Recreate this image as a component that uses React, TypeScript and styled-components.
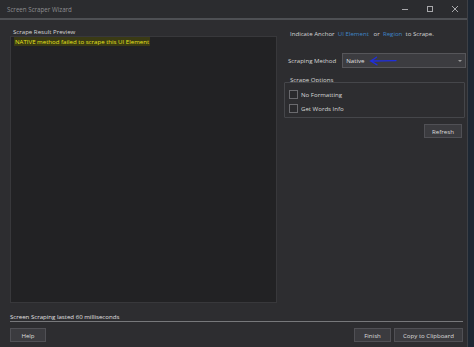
import React from 'react';
import styled, { createGlobalStyle } from 'styled-components';

const Global = createGlobalStyle`
  html, body {
    margin: 0;
    padding: 0;
    background: #1d2733;
  }
  body {
    font-family: 'Open Sans', 'Noto Sans', sans-serif;
  }
`;

const Desktop = styled.div`
  display: flex;
  width: 474px;
  height: 347px;
  overflow: hidden;
  background: #1d2733;
`;

const Window = styled.div`
  display: flex;
  flex-direction: column;
  width: 468px;
  height: 347px;
  background: #2d2d30;
  border-right: 1px solid #3e4045;
  box-sizing: border-box;
`;

const TitleBar = styled.div`
  display: flex;
  align-items: center;
  height: 18px;
  padding-left: 7px;
  background: #2b2c2f;
  border-bottom: 2px solid #4e5054;
  flex-shrink: 0;
`;

const Title = styled.div`
  flex: 1;
  font-size: 6.2px;
  color: #8c8d90;
`;

const WinButton = styled.div`
  width: 25px;
  height: 18px;
  display: flex;
  align-items: center;
  justify-content: center;
`;

const Body = styled.div`
  flex: 1;
  display: flex;
  flex-direction: column;
  padding: 7px 1px 5px 10px;
`;

const Columns = styled.div`
  display: flex;
  gap: 9px;
`;

const Left = styled.div`
  width: 267px;
  display: flex;
  flex-direction: column;
`;

const Right = styled.div`
  flex: 1;
  display: flex;
  flex-direction: column;
  padding-top: 2px;
`;

const Label = styled.div<{ $indent?: number }>`
  font-size: 6.1px;
  line-height: 9px;
  color: #d6d6d6;
  padding-left: ${p => p.$indent ?? 0}px;
  white-space: nowrap;
`;

const Preview = styled.div`
  height: 267px;
  background: #222224;
  border: 1px solid #38383b;
  box-sizing: border-box;
  padding: 0 3px;
  font-size: 6.1px;
  line-height: 9px;
`;

const Warning = styled.div`
  width: fit-content;
  color: #e4e41a;
  background: #3a3a14;
  padding: 0 1px;
`;

const Link = styled.span`
  color: #3f86c8;
`;

const MethodRow = styled.div`
  display: flex;
  align-items: center;
  margin-top: 15px;
  gap: 6px;
`;

const Select = styled.div`
  position: relative;
  flex: 1;
  height: 15px;
  display: flex;
  align-items: center;
  padding: 0 3px;
  background: #3c3c40;
  border: 1px solid #56565a;
  box-sizing: border-box;
  font-size: 6.1px;
  color: #e0e0e0;
`;

const Caret = styled.div`
  margin-left: auto;
  width: 0;
  height: 0;
  border-left: 2px solid transparent;
  border-right: 2px solid transparent;
  border-top: 2px solid #9a9a9a;
`;

const Arrow = styled.svg`
  position: absolute;
  left: 26px;
  top: 2px;
`;

const Group = styled.div`
  margin-top: 7px;
  margin-right: 1px;
  display: flex;
  flex-direction: column;
`;

const GroupBox = styled.div`
  margin-top: -2px;
  margin-left: -2px;
  height: 36px;
  border: 1px solid #45464a;
  border-radius: 1px;
  box-sizing: border-box;
  padding: 7px 0 0 4px;
  display: flex;
  flex-direction: column;
  gap: 5px;
`;

const Check = styled.label`
  display: flex;
  align-items: center;
  gap: 3px;
  font-size: 6.1px;
  line-height: 9px;
  color: #d6d6d6;
`;

const Box = styled.span`
  width: 7px;
  height: 7px;
  border: 1px solid #6a6a6e;
  background: #2a2a2d;
`;

const Button = styled.div<{ $w: number }>`
  width: ${p => p.$w}px;
  height: 14px;
  display: flex;
  align-items: center;
  justify-content: center;
  background: #3b3b3f;
  border: 1px solid #505055;
  box-sizing: border-box;
  font-size: 6.1px;
  color: #dcdcdc;
`;

const RefreshRow = styled.div`
  display: flex;
  justify-content: flex-end;
  margin-top: 6px;
  padding-right: 4px;
`;

const Status = styled.div`
  margin-top: 9px;
  margin-right: 3px;
  font-size: 6.1px;
  line-height: 9px;
  color: #e0e0e0;
  border-bottom: 1px solid #77787b;
`;

const Footer = styled.div`
  display: flex;
  align-items: center;
  margin-top: 6px;
  padding-right: 3px;
  gap: 3px;
`;

const Spacer = styled.div`
  flex: 1;
`;

export default function App() {
  return (
    <Desktop>
      <Global />
      <Window>
        <TitleBar>
          <Title>Screen Scraper Wizard</Title>
          <WinButton>
            <svg width="8" height="8" viewBox="0 0 8 8">
              <path d="M1 4.5h6" stroke="#a8a8ab" strokeWidth="1" />
            </svg>
          </WinButton>
          <WinButton>
            <svg width="8" height="8" viewBox="0 0 8 8">
              <rect x="1.5" y="1.5" width="5" height="5" fill="none" stroke="#a8a8ab" strokeWidth="1" />
            </svg>
          </WinButton>
          <WinButton>
            <svg width="8" height="8" viewBox="0 0 8 8">
              <path d="M1 1l6 6M7 1l-6 6" stroke="#a8a8ab" strokeWidth="1" />
            </svg>
          </WinButton>
        </TitleBar>
        <Body>
          <Columns>
            <Left>
              <Label $indent={3}>Scrape Result Preview</Label>
              <Preview>
                <Warning>NATIVE method failed to scrape this UI Element</Warning>
              </Preview>
            </Left>
            <Right>
              <Label $indent={4}>
                Indicate Anchor&nbsp; <Link>UI Element</Link>&nbsp;&nbsp; or&nbsp; <Link>Region</Link>&nbsp; to Scrape.
              </Label>
              <MethodRow>
                <Label $indent={2}>Scraping Method</Label>
                <Select>
                  Native
                  <Arrow width="28" height="10" viewBox="0 0 28 10">
                    <path
                      d="M27 4.6 C20 4.8 12 5 2.5 5 M7.5 1.2 C5.5 2.6 3.5 3.8 1.5 5 C3.5 6 5.5 7.3 8 8.8"
                      fill="none"
                      stroke="#1f2ee0"
                      strokeWidth="1.3"
                      strokeLinecap="round"
                    />
                  </Arrow>
                  <Caret />
                </Select>
              </MethodRow>
              <Group>
                <Label $indent={4}>Scrape Options</Label>
                <GroupBox>
                  <Check>
                    <Box />
                    No Formatting
                  </Check>
                  <Check>
                    <Box />
                    Get Words Info
                  </Check>
                </GroupBox>
              </Group>
              <RefreshRow>
                <Button $w={38}>Refresh</Button>
              </RefreshRow>
            </Right>
          </Columns>
          <Status>Screen Scraping lasted 60 milliseconds</Status>
          <Footer>
            <Button $w={36}>Help</Button>
            <Spacer />
            <Button $w={37}>Finish</Button>
            <Button $w={69}>Copy to Clipboard</Button>
          </Footer>
        </Body>
      </Window>
    </Desktop>
  );
}
